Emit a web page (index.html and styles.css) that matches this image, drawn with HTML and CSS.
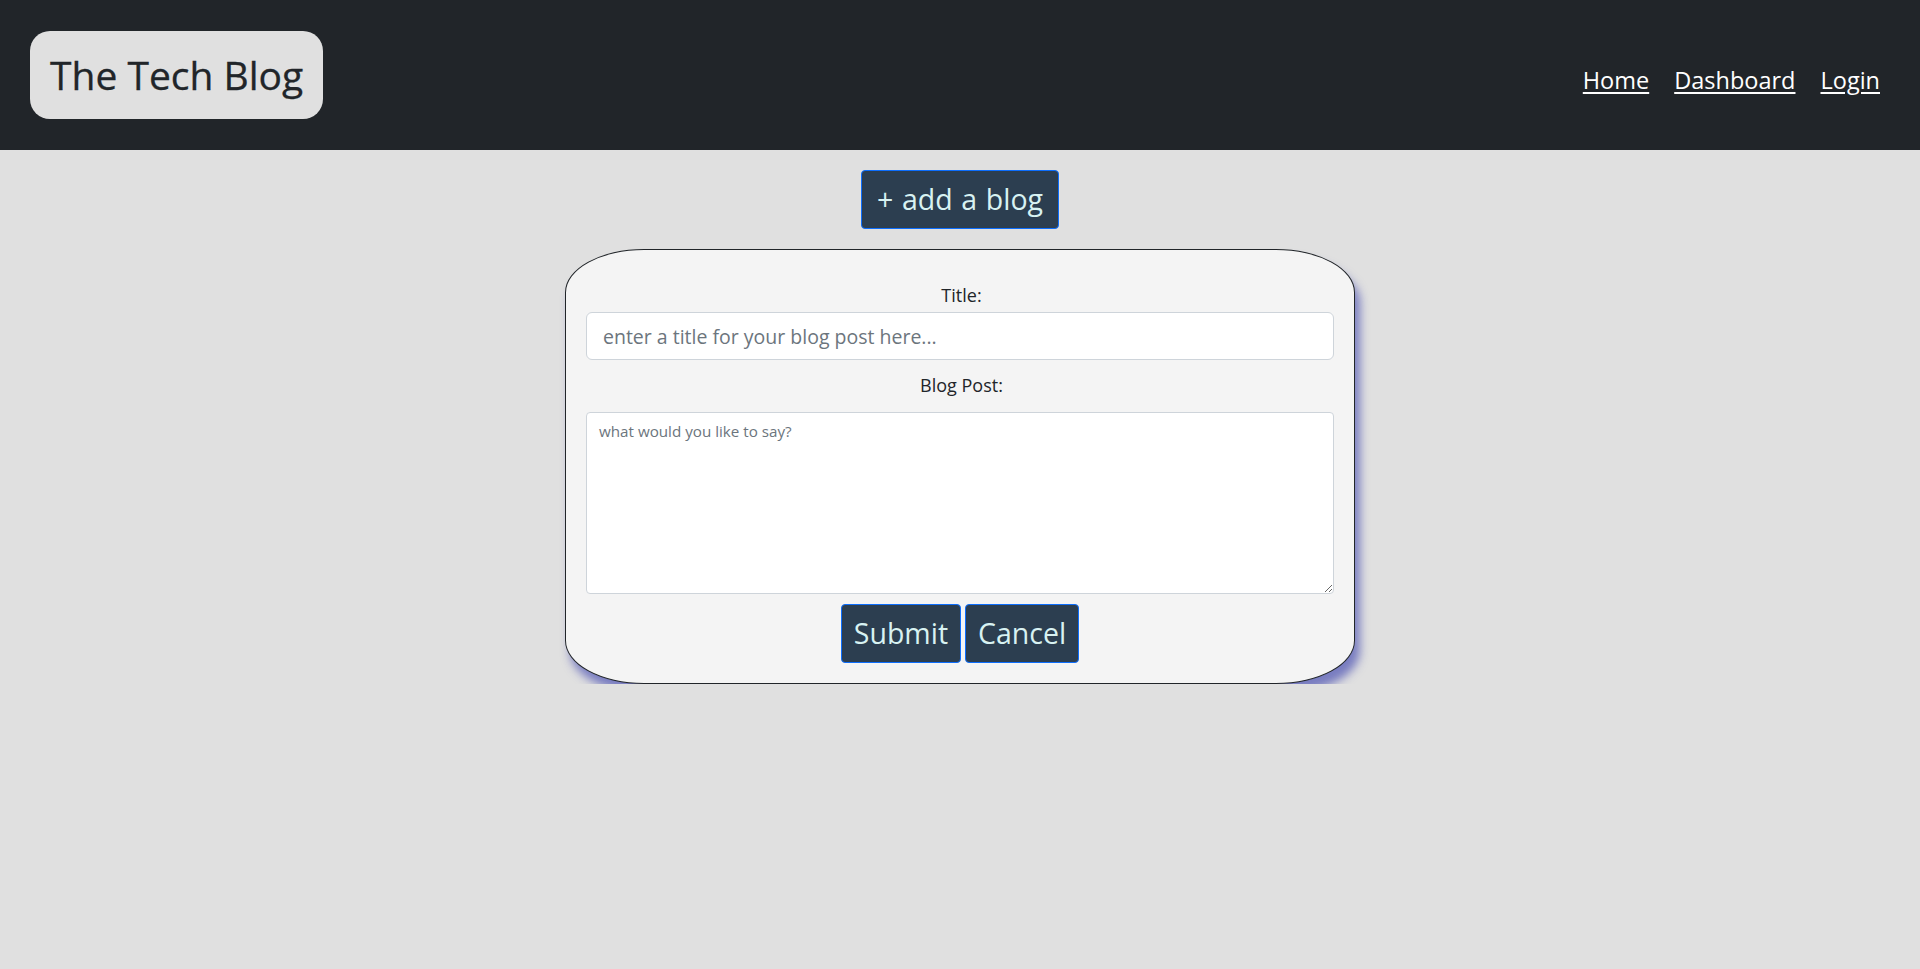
FILE: index.html
```html
<!DOCTYPE html>
<html lang="en">
<head>
<meta charset="UTF-8">
<title>The Tech Blog</title>
<link rel="stylesheet" href="styles.css">
</head>
<body>
<header class="site-header">
  <h1 class="brand">The Tech Blog</h1>
  <nav class="nav">
    <a href="#" class="nav-link">Home</a>
    <a href="#" class="nav-link">Dashboard</a>
    <a href="#" class="nav-link">Login</a>
  </nav>
</header>
<main class="main">
  <button class="btn btn-add" type="button">+ add a blog</button>
  <form class="card">
    <label class="field-label field-label-title" for="title">Title:</label>
    <input class="input" id="title" type="text" placeholder="enter a title for your blog post here...">
    <label class="field-label field-label-post" for="post">Blog Post:</label>
    <textarea class="textarea" id="post" placeholder="what would you like to say?"></textarea>
    <div class="actions">
      <button class="btn" type="submit">Submit</button>
      <button class="btn" type="button">Cancel</button>
    </div>
  </form>
</main>
</body>
</html>
```
FILE: styles.css
```css
* { box-sizing: border-box; }

html, body {
  margin: 0;
  padding: 0;
  background: #e0e0e0;
  font-family: "Open Sans", "Noto Sans", sans-serif;
  color: #212529;
}

.site-header {
  height: 150px;
  background: #212529;
  display: flex;
  align-items: center;
  justify-content: space-between;
  padding: 0 40px 0 30px;
}

.brand {
  margin: 0;
  background: #e0e0e0;
  border-radius: 20px;
  padding: 20px 20px;
  font-size: 39px;
  line-height: 48px;
  font-weight: 400;
  color: #212529;
  -webkit-text-stroke: 0.3px #212529;
}

.nav {
  display: flex;
  gap: 25px;
  margin-top: 10px;
}

.nav-link {
  color: #ffffff;
  font-size: 23.5px;
  line-height: 36px;
  text-decoration: underline;
  text-underline-offset: 3px;
}

.main {
  display: flex;
  flex-direction: column;
  align-items: center;
  padding-top: 20px;
}

.btn {
  font-family: "Open Sans", "Noto Sans", sans-serif;
  background: #2c3e50;
  color: #d8f2f2;
  border: 1px solid #0d6efd;
  border-radius: 4px;
  font-size: 28.5px;
  line-height: 45px;
  padding: 6px 12px;
  margin: 0;
  cursor: pointer;
}

.btn-add {
  word-spacing: 1.3px;
  padding: 6px 15px;
}

.card {
  width: 790px;
  margin-top: 20px;
  background: #f4f4f4;
  border: 1px solid #212529;
  border-radius: 10%;
  padding: 20px;
  text-align: center;
  box-shadow: 5px 10px 10px rgba(65, 70, 175, 0.65);
}

.field-label {
  display: block;
  font-size: 18px;
  line-height: 27px;
  margin-top: 12px;
  padding-left: 3px;
}

.field-label-title { margin-bottom: 3px; }
.field-label-post { margin-bottom: 13px; }

.input {
  display: block;
  width: 100%;
  height: 48px;
  font-family: "Open Sans", "Noto Sans", sans-serif;
  font-size: 19.5px;
  line-height: 30px;
  padding: 8px 16px;
  border: 1px solid #ced4da;
  border-radius: 6px;
  background: #ffffff;
  color: #212529;
}

.textarea {
  display: block;
  width: 100%;
  height: 182px;
  font-family: "Open Sans", "Noto Sans", sans-serif;
  font-size: 15.2px;
  line-height: 24px;
  padding: 6px 12px;
  border: 1px solid #ced4da;
  border-radius: 4px;
  background: #ffffff;
  color: #212529;
  resize: vertical;
}

.input::placeholder,
.textarea::placeholder {
  color: #6c757d;
  opacity: 1;
}

.actions {
  margin-top: 10px;
  display: flex;
  justify-content: center;
  gap: 4px;
}
```
